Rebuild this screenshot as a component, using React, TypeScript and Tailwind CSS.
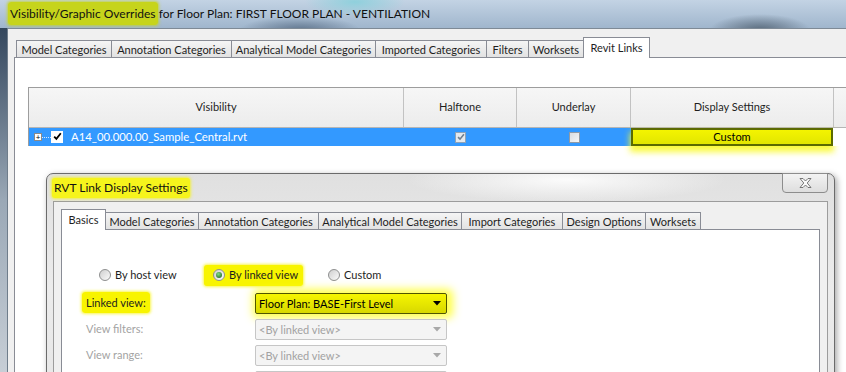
import React from 'react';

type TabDef = { label: string; w: number; active?: boolean };

const mainTabs: TabDef[] = [
  { label: 'Model Categories', w: 96 },
  { label: 'Annotation Categories', w: 121 },
  { label: 'Analytical Model Categories', w: 145 },
  { label: 'Imported Categories', w: 112 },
  { label: 'Filters', w: 43 },
  { label: 'Worksets', w: 56 },
  { label: 'Revit Links', w: 67, active: true },
];

const dialogTabs: TabDef[] = [
  { label: 'Basics', w: 45, active: true },
  { label: 'Model Categories', w: 94 },
  { label: 'Annotation Categories', w: 121 },
  { label: 'Analytical Model Categories', w: 144 },
  { label: 'Import Categories', w: 102 },
  { label: 'Design Options', w: 84 },
  { label: 'Worksets', w: 56 },
];

const TabStrip = ({ tabs }: { tabs: TabDef[] }) => (
  <div className="flex h-[20px] items-end">
    {tabs.map((t, i) => (
      <div
        key={t.label}
        style={{ width: t.w }}
        className={
          (i > 0 ? '-ml-px ' : '') +
          (t.active
            ? 'relative z-10 -mb-px flex h-[21px] items-center justify-center border border-b-0 border-[#898c95] bg-white pb-[1px]'
            : 'flex h-[17px] items-center justify-center border border-b-0 border-[#898c95] bg-linear-to-b from-[#f5f5f5] to-[#e2e2e2]')
        }
      >
        <span className="whitespace-nowrap leading-none">{t.label}</span>
      </div>
    ))}
  </div>
);

const Check = ({ color = '#000', size = 9 }: { color?: string; size?: number }) => (
  <svg width={size} height={size} viewBox="0 0 9 9">
    <path d="M1.2 4.6 L3.4 6.9 L7.8 1.3" stroke={color} strokeWidth="1.8" fill="none" />
  </svg>
);

const Arrow = ({ color }: { color: string }) => (
  <svg width="8" height="5" viewBox="0 0 8 5">
    <path d="M0 0 H8 L4 4.5 Z" fill={color} />
  </svg>
);

const Radio = ({ on }: { on?: boolean }) => (
  <span className="flex h-[12px] w-[12px] shrink-0 items-center justify-center rounded-full border border-[#8e8f8f] bg-linear-to-br from-[#cfcfcf] to-[#fbfbfb]">
    {on && (
      <span className="h-[6px] w-[6px] rounded-full bg-[radial-gradient(circle_at_40%_35%,#7fe07f,#155515)]" />
    )}
  </span>
);

const Combo = ({ text, hl }: { text: string; hl?: boolean }) => (
  <div
    className={
      hl
        ? 'flex h-[21px] w-[192px] items-center justify-between rounded-[2px] border border-[#4f5500] bg-linear-to-b from-[#f6f600] to-[#d8d800] pl-[3px] pr-[5px] text-black shadow-[2px_0_8px_4px_rgba(255,255,40,0.85)]'
        : 'flex h-[21px] w-[192px] items-center justify-between rounded-[2px] border border-[#c6c6c6] bg-[#f4f4f4] pl-[3px] pr-[5px] text-[#a2a2a2]'
    }
  >
    <span className="leading-none">{text}</span>
    <Arrow color={hl ? '#000' : '#a8a8a8'} />
  </div>
);

export default function App() {
  return (
    <div className="relative h-[372px] w-[846px] overflow-hidden font-['Lato',sans-serif] text-[11px] text-[#1e1e1e]">
      {/* title bar */}
      <div className="flex h-[28px] items-center bg-[radial-gradient(ellipse_60px_14px_at_300px_30px,#61768e,transparent),radial-gradient(ellipse_50px_14px_at_355px_2px,#8fd0dc,transparent),radial-gradient(ellipse_50px_16px_at_760px_30px,#5a6b7c,transparent),linear-gradient(to_bottom,#c3d3e4,#a0b6cd)] pl-[10px]">
        <span className="whitespace-nowrap text-[12px] leading-none text-[#111]">
          <span className="-mx-[2px] rounded-[3px] bg-[#c6d41c] px-[2px] py-[4px] shadow-[0_0_3px_1px_rgba(198,212,28,0.8)]">
            Visibility/Graphic Overrides
          </span>{' '}
          for Floor Plan: FIRST FLOOR PLAN - VENTILATION
        </span>
      </div>

      <div className="flex h-[344px]">
        {/* left glass frame */}
        <div className="w-[8px] border-r border-[#6f7d8b] bg-linear-to-b from-[#34475d] via-[#9aa8b6] to-[#c7ced6]" />

        {/* window body */}
        <div className="flex-1 border-t border-[#7e8a96] bg-[#f0f0f0] pl-[6px] pt-[8px]">
          <div className="pl-[2px]">
            <TabStrip tabs={mainTabs} />
          </div>
          <div className="h-[400px] border-l border-t border-[#898c95] bg-white pl-[13px] pt-[29px]">
            {/* table */}
            <div className="border-l border-t border-[#9d9d9d]">
              <div className="flex h-[40px] border-b border-[#b5b5b5] bg-linear-to-b from-[#f6f6f6] to-[#ececec]">
                <div className="flex w-[375px] items-center justify-center border-r border-[#c2c2c2]">Visibility</div>
                <div className="flex w-[113px] items-center justify-center border-r border-[#c2c2c2]">Halftone</div>
                <div className="flex w-[114px] items-center justify-center border-r border-[#c2c2c2]">Underlay</div>
                <div className="flex w-[203px] items-center justify-center border-r border-[#c2c2c2]">Display Settings</div>
                <div className="flex-1" />
              </div>
              <div className="flex h-[18px]">
                <div className="flex w-[602px] items-center bg-[#3399ff]">
                  <div className="flex w-[375px] items-center pl-[5px]">
                    <span className="flex h-[8px] w-[8px] items-center justify-center border border-[#8a8a8a] bg-white text-[8px] leading-none text-black">
                      +
                    </span>
                    <span className="w-[9px] border-t border-dotted border-[#d8e8ff]" />
                    <span className="flex h-[12px] w-[12px] items-center justify-center border-b border-white bg-white">
                      <Check />
                    </span>
                    <span className="ml-[8px] whitespace-nowrap text-[11.3px] text-white">A14_00.000.00_Sample_Central.rvt</span>
                  </div>
                  <div className="flex w-[113px] justify-center">
                    <span className="flex h-[11px] w-[11px] items-center justify-center border border-[#8fa3b8] bg-[#e4e9ee]">
                      <Check color="#6f7f90" size={8} />
                    </span>
                  </div>
                  <div className="flex w-[114px] justify-center">
                    <span className="h-[11px] w-[11px] border border-[#8f9aa6] bg-linear-to-br from-[#d9dde2] to-[#f5f6f7]" />
                  </div>
                </div>
                <div className="flex w-[202px] items-center justify-center border-2 border-[#5b6a00] bg-linear-to-b from-[#f4f400] to-[#e2e600] text-black shadow-[0_5px_6px_1px_rgba(250,250,40,0.9)]">
                  Custom
                </div>
                <div className="flex-1 bg-white" />
              </div>
            </div>
          </div>
        </div>
      </div>

      {/* RVT Link Display Settings dialog */}
      <div className="absolute left-[46px] top-[173px] h-[230px] w-[789px] rounded-t-[7px] border border-[#6b6b6b] bg-linear-to-b from-[#e0e0e0] via-[#ececec] to-[#e6e6e6] shadow-[2px_2px_6px_rgba(0,0,0,0.35)]">
        <div className="relative flex h-[27px] items-center bg-[radial-gradient(ellipse_160px_22px_at_520px_6px,#fbfbfb,transparent)] pl-[7px]">
          <span className="-mx-[2px] rounded-[3px] bg-[#f6f41c] px-[2px] py-[4px] text-[12px] leading-none text-[#111] shadow-[0_0_3px_1px_rgba(246,244,28,0.8)]">
            RVT Link Display Settings
          </span>
          <div className="absolute right-[6px] top-[-1px] flex h-[20px] w-[46px] items-center justify-center rounded-b-[4px] border border-[#8d8d8d] bg-linear-to-b from-[#f3f3f3] to-[#dedede]">
            <svg width="13" height="10" viewBox="0 0 13 10">
              <path
                d="M1 0.5 H4 L6.5 3 L9 0.5 H12 L8.2 5 L12 9.5 H9 L6.5 7 L4 9.5 H1 L4.8 5 Z"
                fill="#fafafa"
                stroke="#6a6a6a"
                strokeWidth="0.9"
              />
            </svg>
          </div>
        </div>

        <div className="mx-[6px] h-[200px] border border-[#9c9c9c] bg-[#f0f0f0] px-[7px] pt-[7px]">
          <TabStrip tabs={dialogTabs} />
          <div className="h-[180px] border border-[#898c95] bg-white">
            <div className="mt-[35px] flex h-[20px] items-center pl-[37px]">
              <div className="flex w-[114px] items-center gap-[4px]">
                <Radio />
                <span>By host view</span>
              </div>
              <div className="flex w-[115px] items-center">
                <div className="-ml-[9px] flex h-[21px] items-center gap-[4px] rounded-[3px] bg-[#f8f400] pl-[9px] pr-[5px] shadow-[0_0_3px_1px_rgba(248,244,0,0.7)]">
                  <Radio on />
                  <span>By linked view</span>
                </div>
              </div>
              <div className="flex items-center gap-[4px]">
                <Radio />
                <span>Custom</span>
              </div>
            </div>

            <div className="mt-[8px] flex flex-col gap-[5px] pl-[24px]">
              <div className="flex items-center">
                <div className="w-[169px]">
                  <span className="-mx-[4px] rounded-[3px] bg-[#f8f400] px-[4px] py-[4px] shadow-[0_0_3px_1px_rgba(248,244,0,0.7)]">
                    Linked view:
                  </span>
                </div>
                <Combo text="Floor Plan: BASE-First Level" hl />
              </div>
              <div className="flex items-center">
                <div className="w-[169px] text-[#a3a3a3]">View filters:</div>
                <Combo text="<By linked view>" />
              </div>
              <div className="flex items-center">
                <div className="w-[169px] text-[#a3a3a3]">View range:</div>
                <Combo text="<By linked view>" />
              </div>
              <div className="flex items-center">
                <div className="w-[169px]" />
                <Combo text="" />
              </div>
            </div>
          </div>
        </div>
      </div>
    </div>
  );
}
